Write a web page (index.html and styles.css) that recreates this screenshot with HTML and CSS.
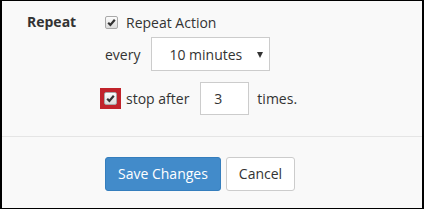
FILE: index.html
```html
<!DOCTYPE html>
<html lang="en">
<head>
  <meta charset="UTF-8" />
  <title>Repeat Settings</title>
  <link rel="stylesheet" href="styles.css">
</head>
<body>
  <div class="panel">
    <div class="form-row">
      <div class="row-label">Repeat</div>
      <div class="row-controls">
        <label class="line line-check">
          <span class="fake-check"><svg width="13" height="13" viewBox="0 0 13 13"><path d="M3.2 6.8 L5.4 9 L9.8 3.8" fill="none" stroke="#333" stroke-width="2.2"/></svg></span>
          <span class="gap-8">Repeat Action</span>
        </label>
        <div class="line line-every">
          <span>every</span>
          <span class="select-wrap">
            <select class="select"><option>10 minutes</option></select>
          </span>
        </div>
        <div class="line line-stop">
          <span class="highlight">
            <span class="fake-check"><svg width="13" height="13" viewBox="0 0 13 13"><path d="M3.2 6.8 L5.4 9 L9.8 3.8" fill="none" stroke="#333" stroke-width="2.2"/></svg></span>
          </span>
          <span class="stop-text">stop after</span>
          <input type="text" class="count" value="3">
          <span class="times-text">times.</span>
        </div>
      </div>
    </div>
    <div class="actions">
      <button class="btn btn-primary">Save Changes</button>
      <button class="btn btn-default">Cancel</button>
    </div>
  </div>
</body>
</html>
```

FILE: styles.css
```css
html, body {
  margin: 0;
  padding: 0;
}
body {
  font-family: "Open Sans", "Liberation Sans", sans-serif;
  font-size: 14px;
  color: #333;
}
.panel {
  box-sizing: border-box;
  width: 424px;
  height: 209px;
  background-color: #f9f9f9;
  border: 1px solid #000;
  border-left-width: 2px;
  border-right-width: 2px;
}

.form-row {
  display: grid;
  grid-template-columns: 78px 1fr;
  padding: 11px 0 0 25px;
  border-bottom: 1px solid #e5e5e5;
  height: 136px;
  box-sizing: border-box;
}
.row-label {
  font-weight: bold;
  line-height: 20px;
}
.row-controls {
  display: flex;
  flex-direction: column;
}
.line {
  display: flex;
  align-items: center;
}
.line-check {
  height: 20px;
}
.gap-8 {
  margin-left: 8px;
}
.fake-check {
  display: inline-block;
  box-sizing: border-box;
  width: 13px;
  height: 13px;
  border: 1px solid #a9a9a9;
  border-radius: 2px;
  background: linear-gradient(#fcfcfc, #dcdcdc);
  line-height: 0;
}
.fake-check svg {
  margin: -1px 0 0 -1px;
}

.line-every {
  margin-top: 5px;
}
.select-wrap {
  position: relative;
  margin-left: 11px;
}
.select-wrap::after {
  content: "";
  position: absolute;
  right: 7px;
  top: 15px;
  border-left: 3.5px solid transparent;
  border-right: 3.5px solid transparent;
  border-top: 6px solid #333;
  pointer-events: none;
}
.select {
  appearance: none;
  -webkit-appearance: none;
  box-sizing: border-box;
  width: 119px;
  height: 34px;
  padding: 0 0 0 17px;
  border: 1px solid #ccc;
  border-radius: 0;
  background-color: #fff;
  font-family: inherit;
  font-size: 14px;
  color: #333;
}

.line-stop {
  margin-top: 11px;
}
.highlight {
  display: inline-block;
  background-color: #c1232b;
  padding: 4px;
  margin-left: -5px;
  line-height: 0;
}
.stop-text {
  margin-left: 5px;
}
.count {
  box-sizing: border-box;
  width: 49px;
  height: 33px;
  margin-left: 11px;
  padding: 0 0 0 13px;
  border: 1px solid #ccc;
  background-color: #fff;
  font-family: inherit;
  font-size: 14px;
  color: #333;
}
.times-text {
  margin-left: 8px;
}

.actions {
  display: flex;
  gap: 5px;
  padding: 20px 0 0 103px;
}
.btn {
  box-sizing: border-box;
  height: 34px;
  padding: 6px 12px;
  font-family: inherit;
  font-size: 14px;
  line-height: 20px;
  border: 1px solid transparent;
  border-radius: 3px;
  cursor: pointer;
}
.btn-primary {
  color: #fff;
  background-color: #428bca;
  border-color: #357ebd;
}
.btn-default {
  color: #333;
  background-color: #fff;
  border-color: #ccc;
}
```
